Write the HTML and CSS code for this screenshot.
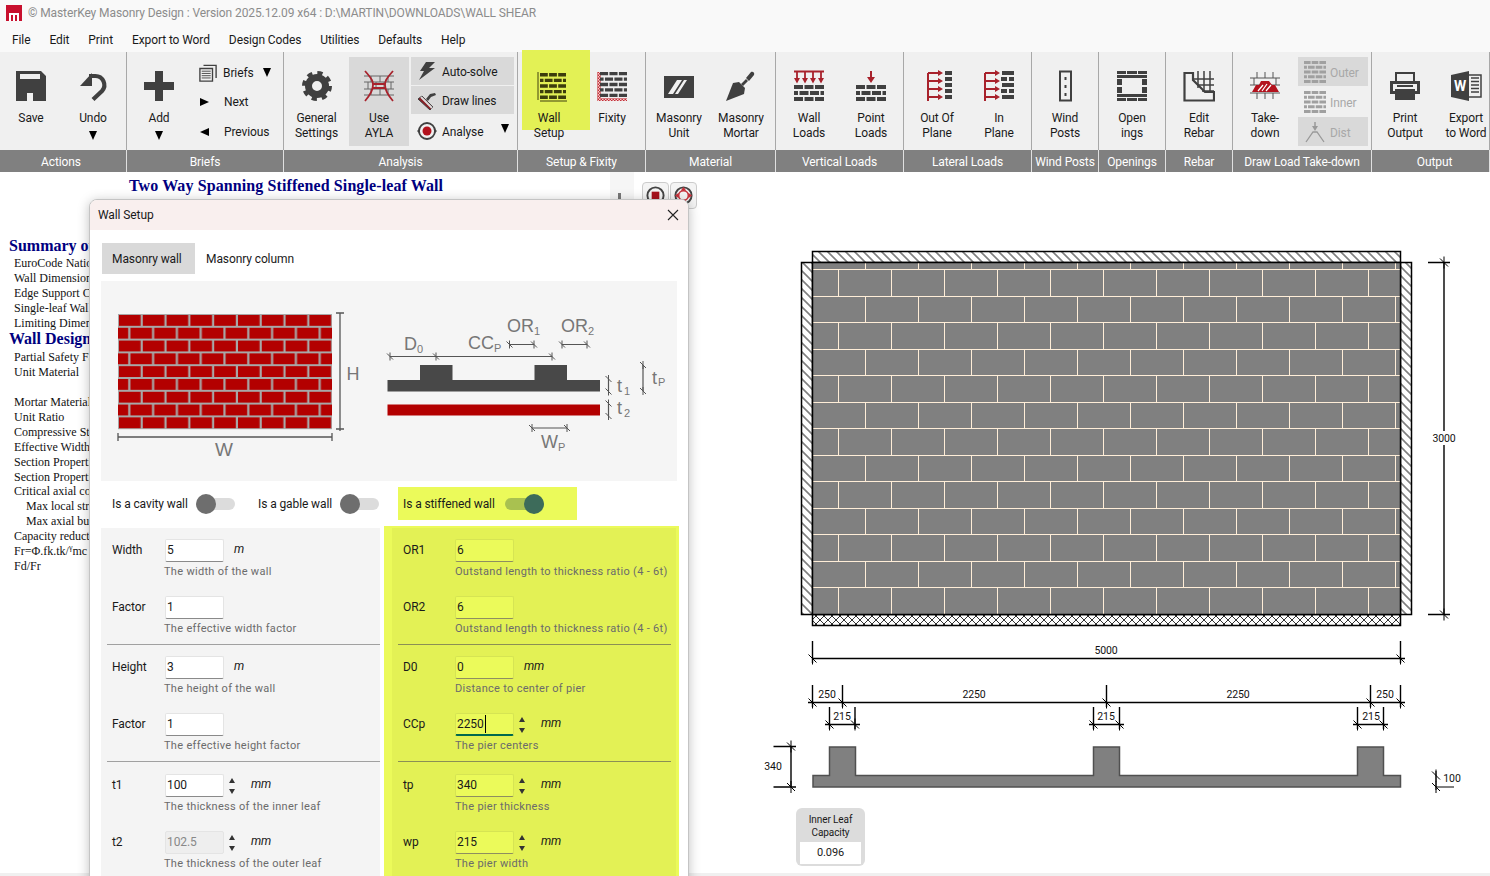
FILE: index.html
```html
<!DOCTYPE html>
<html lang="en">
<head>
    <meta charset="UTF-8">
    <meta name="viewport" content="width=device-width, initial-scale=1.0">
    <title>MasterKey Masonry Design</title>
    <link rel="stylesheet" href="styles.css">
</head>
<body>
    <!-- shared icon parts -->
    <svg class="defs" width="0" height="0">
        <defs>
            <symbol id="bricks" viewBox="0 0 30 30" preserveAspectRatio="none">
                <g fill="currentColor">
                    <path d="M0 0h9v4H0zM10.500 0h9v4h-9zM21 0h9v4h-9z"/>
                    <path d="M0 6.500h4v4H0zM5.500 6.500h9v4h-9zM16 6.500h9v4h-9zM26.500 6.500H30v4h-3.500z"/>
                    <path d="M0 13h9v4H0zM10.500 13h9v4h-9zM21 13h9v4h-9z"/>
                    <path d="M0 19.500h4v4H0zM5.500 19.500h9v4h-9zM16 19.500h9v4h-9zM26.500 19.500H30v4h-3.500z"/>
                    <path d="M0 26h9v4H0zM10.500 26h9v4h-9zM21 26h9v4h-9z"/>
                </g>
            </symbol>
            <symbol id="bricks-low" viewBox="0 0 30 16" preserveAspectRatio="none">
                <path fill="currentColor" d="M0 0h9v4H0zM10.500 0h9v4h-9zM21 0h9v4h-9zM0 6h4v4H0zM5.500 6h9v4h-9zM16 6h9v4h-9zM26.500 6H30v4h-3.500zM0 12h9v4H0zM10.500 12h9v4h-9zM21 12h9v4h-9z"/>
            </symbol>
            <g id="tick"><path d="M-4 -4L4 4M0 -6V6" stroke="#000" fill="none"/></g>
            <g id="tick-grey"><path d="M-3 -3L3 3M0 -4V4" stroke="#555" fill="none"/></g>
            <pattern id="hatch" width="9" height="9" patternUnits="userSpaceOnUse">
                <path d="M-1 -1L10 10M-1 8L1 10M8 -1L10 1" stroke="#808080" stroke-width="1.600"/>
            </pattern>
            <pattern id="cross" width="8" height="8" patternUnits="userSpaceOnUse">
                <path d="M0 0L8 8M8 0L0 8" stroke="#333" stroke-width="1"/>
            </pattern>
            <pattern id="red-check" width="3" height="3" patternUnits="userSpaceOnUse">
                <rect width="3" height="3" fill="#f3c9c9"/>
                <path d="M0 0h1.500v1.500H0zM1.500 1.500H3V3H1.500z" fill="#c0303a"/>
            </pattern>
            <pattern id="wall-bricks" x="812" y="269" width="53" height="53" patternUnits="userSpaceOnUse">
                <rect width="53" height="53" fill="#808080"/>
                <path d="M0 0h53v1H0zM0 27h53v1H0zM26 1h1v26h-1zM0 28h1v25H0z" fill="#ffeed8"/>
            </pattern>
            <pattern id="red-bricks" x="118" y="314" width="23.800" height="25.600" patternUnits="userSpaceOnUse">
                <rect width="23.800" height="25.600" fill="#a8a8a8"/>
                <path d="M1 1h21.600v10.800H1zM-11.400 13.800h21.600v10.800h-21.600zM12.400 13.800h21.600v10.800H12.400z" fill="#b30000"/>
            </pattern>
        </defs>
    </svg>

    <header class="titlebar">
        <svg class="logo" viewBox="0 0 16 16"><rect width="16" height="16" fill="#c8102e"/><path d="M3 8h10v8h-2V10H9v6H7V10H5v6H3z" fill="#fff"/></svg>
        <span>© MasterKey Masonry Design : Version 2025.12.09 x64 : D:\MARTIN\DOWNLOADS\WALL SHEAR</span>
    </header>

    <nav class="menubar">
        <span>File</span><span>Edit</span><span>Print</span><span>Export to Word</span><span>Design Codes</span><span>Utilities</span><span>Defaults</span><span>Help</span>
    </nav>

    <section class="ribbon">
        <div class="group g-actions">
            <div class="group-body">
                <div class="tool">
                    <svg class="icon" viewBox="0 0 32 32"><path fill-rule="evenodd" fill="#404040" d="M1 1h25l5 5v25H1zM5 4v5h20V4zM12 23v8h6v-8z"/></svg>
                    <span>Save</span>
                </div>
                <div class="tool">
                    <svg class="icon" viewBox="0 0 32 32"><path d="M12 6h6a9 9 0 0 1 7 15l-9 8.500" fill="none" stroke="#404040" stroke-width="4.200"/><path d="M3 16L15 3v13z" fill="#404040"/></svg>
                    <span>Undo</span>
                    <i class="tri-down tool-caret"></i>
                </div>
            </div>
            <div class="group-foot">Actions</div>
        </div>

        <div class="group g-briefs">
            <div class="group-body">
                <div class="tool tool-wide">
                    <svg class="icon" viewBox="0 0 32 32"><path d="M12 1h8v11h11v8H20v11h-8V20H1v-8h11z" fill="#404040"/></svg>
                    <span>Add</span>
                    <i class="tri-down tool-caret"></i>
                </div>
                <div class="side-list side-briefs">
                    <div class="side-item">
                        <svg class="side-icon" viewBox="0 0 20 20"><path d="M5 1.500h14v14M1 5h14v14H1z" fill="#f0f0f0" stroke="#404040" stroke-width="1.500"/><path d="M3 8h10M3 10.500h10M3 13h10M3 15.500h10" stroke="#404040"/></svg>
                        <span>Briefs</span><i class="tri-down brief-caret"></i>
                    </div>
                    <div class="side-item"><i class="tri-right"></i><span>Next</span></div>
                    <div class="side-item"><i class="tri-left"></i><span>Previous</span></div>
                </div>
            </div>
            <div class="group-foot">Briefs</div>
        </div>

        <div class="group g-analysis">
            <div class="group-body">
                <div class="tool tool-general">
                    <svg class="icon" viewBox="0 0 32 32"><circle cx="16" cy="16" r="8.500" fill="none" stroke="#404040" stroke-width="7"/><circle cx="16" cy="16" r="13" fill="none" stroke="#404040" stroke-width="4" stroke-dasharray="5.200 5"/></svg>
                    <span>General<br>Settings</span>
                </div>
                <div class="tool tool-ayla">
                    <svg class="icon" viewBox="0 0 32 32"><path d="M1 6H31M1 12H31M1 19H31M1 25H31M8 6v6M17 6v6M25 6v6M5 12v7M13 12v7M21 12v7M28 12v7M8 19v6M17 19v6M25 19v6" stroke="#666" fill="none"/><path d="M2 1C10 10 10 12 10 15C10 19 8 24 2 31M30 1C22 10 22 12 22 15C22 19 24 24 30 31M10 14H22M10 18H22" stroke="#a8222c" stroke-width="1.800" fill="none"/></svg>
                    <span>Use<br>AYLA</span>
                </div>
                <div class="side-list side-analysis">
                    <div class="side-item side-on">
                        <svg class="side-icon" viewBox="0 0 20 20"><path d="M9 1h9l-6 6h6L2 19l5-9H3z" fill="#404040"/></svg>
                        <span>Auto-solve</span>
                    </div>
                    <div class="side-item side-on">
                        <svg class="side-icon" viewBox="0 0 20 20"><path d="M5 6L16 17l-3 3L1 9z" fill="#8a1f26" stroke="#404040"/><path d="M4 7l11 11" stroke="#ddd" stroke-width="2"/><path d="M9 9l4-5 5-1 1 2-5 2-3 4" fill="#404040"/></svg>
                        <span>Draw lines</span>
                    </div>
                    <div class="side-item side-analyse">
                        <svg class="side-icon" viewBox="0 0 20 20"><circle cx="10" cy="10" r="8" fill="none" stroke="#404040" stroke-width="1.800"/><circle cx="10" cy="10" r="4.500" fill="#b3121d"/><path d="M0 10l3-3v6zM20 10l-3-3v6z" fill="#404040"/></svg>
                        <span>Analyse</span><i class="tri-down analyse-caret"></i>
                    </div>
                </div>
            </div>
            <div class="group-foot">Analysis</div>
        </div>

        <div class="group g-setup">
            <div class="group-body">
                <div class="tool tool-mark">
                    <svg class="icon icon-olive" viewBox="0 0 32 32"><use href="#bricks" x="3" y="3" width="26" height="26"/><path d="M1 2v28M3 31H30" stroke="#404010" fill="none"/></svg>
                    <span>Wall<br>Setup</span>
                </div>
                <div class="tool tool-fixity">
                    <svg class="icon icon-dark" viewBox="0 0 32 32"><path d="M1 2h4v26h26v3H1z" fill="url(#red-check)"/><use href="#bricks" x="4" y="2" width="27" height="25"/></svg>
                    <span>Fixity</span>
                </div>
            </div>
            <div class="group-foot">Setup &amp; Fixity</div>
        </div>

        <div class="group g-material">
            <div class="group-body">
                <div class="tool">
                    <svg class="icon" viewBox="0 0 32 32"><path fill-rule="evenodd" fill="#404040" d="M1 6h30v22H1zM5 24h5L19 10h-5zM12 24h3L24 10h-3z"/></svg>
                    <span>Masonry<br>Unit</span>
                </div>
                <div class="tool">
                    <svg class="icon" viewBox="0 0 32 32"><path d="M1 31L8 13l6-1 6 6-1 6z" fill="#404040"/><path d="M16 14l5-5 2 2-5 5zM21 8l5-6c2-1 4 1 3 3l-5 6z" fill="#404040"/></svg>
                    <span>Masonry<br>Mortar</span>
                </div>
            </div>
            <div class="group-foot">Material</div>
        </div>

        <div class="group g-vertical">
            <div class="group-body">
                <div class="tool">
                    <svg class="icon icon-dark" viewBox="0 0 32 32"><use href="#bricks-low" x="1" y="15" width="30" height="16"/><path d="M1 1.500H31M4 1v10M12 1v10M20 1v10M28 1v10" stroke="#a8222c" stroke-width="1.800" fill="none"/><path d="M1 8h6l-3 5.500zM9 8h6l-3 5.500zM17 8h6l-3 5.500zM25 8h6l-3 5.500z" fill="#a8222c"/></svg>
                    <span>Wall<br>Loads</span>
                </div>
                <div class="tool">
                    <svg class="icon icon-dark" viewBox="0 0 32 32"><use href="#bricks-low" x="1" y="15" width="30" height="16"/><path d="M16 1v8" stroke="#a8222c" stroke-width="2"/><path d="M12 7h8l-4 6z" fill="#a8222c"/></svg>
                    <span>Point<br>Loads</span>
                </div>
            </div>
            <div class="group-foot">Vertical Loads</div>
        </div>

        <div class="group g-lateral">
            <div class="group-body">
                <div class="tool">
                    <svg class="icon icon-dark" viewBox="0 0 32 32"><path d="M7 3v28M7 3H19M7 11H19M7 19H19M7 27H19" stroke="#a8222c" stroke-width="2" fill="none"/><path d="M17 0l5 3-5 3zM17 8l5 3-5 3zM17 16l5 3-5 3zM17 24l5 3-5 3z" fill="#a8222c"/><path d="M24 1h7v4h-7zM24 7h7v4h-7zM24 13h7v4h-7zM24 19h7v4h-7zM24 25h7v4h-7z" fill="#404040"/></svg>
                    <span>Out Of<br>Plane</span>
                </div>
                <div class="tool">
                    <svg class="icon icon-dark" viewBox="0 0 32 32"><path d="M2 3v28M2 3H14M2 11H14M2 19H14M2 27H14" stroke="#a8222c" stroke-width="2" fill="none"/><path d="M12 0l5 3-5 3zM12 8l5 3-5 3zM12 16l5 3-5 3zM12 24l5 3-5 3z" fill="#a8222c"/><path d="M19 1h12v4H19zM18 7h6v4h-6zM26 7h5v4h-5zM19 13h12v4H19zM18 19h6v4h-6zM26 19h5v4h-5zM19 25h12v4H19z" fill="#404040"/></svg>
                    <span>In<br>Plane</span>
                </div>
            </div>
            <div class="group-foot">Lateral Loads</div>
        </div>

        <div class="group g-narrow">
            <div class="group-body">
                <div class="tool tool-solo">
                    <svg class="icon" viewBox="0 0 32 32"><rect x="11" y="1.500" width="11" height="29" fill="none" stroke="#404040" stroke-width="2"/><path d="M15.500 7h2v3h-2zM15.500 15h2v3h-2zM15.500 23h2v3h-2z" fill="#404040"/></svg>
                    <span>Wind<br>Posts</span>
                </div>
            </div>
            <div class="group-foot">Wind Posts</div>
        </div>

        <div class="group g-narrow">
            <div class="group-body">
                <div class="tool tool-solo">
                    <svg class="icon" viewBox="0 0 32 32"><path d="M1 1h9v3H1zM11 1h10v3H11zM22 1h9v3h-9zM1 28h9v3H1zM11 28h10v3H11zM22 28h9v3h-9zM1 5h30v3H1zM1 24h30v3H1zM1 9h5v6H1zM1 17h5v6H1zM26 9h5v6h-5zM26 17h5v6h-5z" fill="#404040"/></svg>
                    <span>Open<br>ings</span>
                </div>
            </div>
            <div class="group-foot">Openings</div>
        </div>

        <div class="group g-narrow">
            <div class="group-body">
                <div class="tool tool-solo">
                    <svg class="icon" viewBox="0 0 32 32"><path d="M1.500 3V30.500H31V22H22L10 10V3z" fill="none" stroke="#404040" stroke-width="2.200"/><path d="M10 9H31M14 15H31M19 21H31M15 1V18M21 1V22M27 1V22" stroke="#404040" stroke-width="1.500" fill="none"/></svg>
                    <span>Edit<br>Rebar</span>
                </div>
            </div>
            <div class="group-foot">Rebar</div>
        </div>

        <div class="group g-takedown">
            <div class="group-body">
                <div class="tool tool-wide">
                    <svg class="icon" viewBox="0 0 32 32"><path d="M1 8H31M1 15H31M1 23H31M8 2v6M16 2v6M24 2v6M5 8v7M27 8v7M8 23v6M16 23v6M24 23v6" stroke="#555" fill="none"/><path d="M3 22l4-7h3l2-4h8l3 4h3l4 7z" fill="#b3121d"/><path d="M9 21l5-6M13 21l5-7M17 21l5-6" stroke="#fff" stroke-width="1.200"/></svg>
                    <span>Take-<br>down</span>
                </div>
                <div class="side-list side-takedown">
                    <div class="side-item side-off side-on">
                        <svg class="side-icon" viewBox="0 0 22 22"><use href="#bricks" width="22" height="22"/></svg>
                        <span>Outer</span>
                    </div>
                    <div class="side-item side-off">
                        <svg class="side-icon" viewBox="0 0 22 22"><use href="#bricks" width="22" height="22"/></svg>
                        <span>Inner</span>
                    </div>
                    <div class="side-item side-off side-on">
                        <svg class="side-icon" viewBox="0 0 22 22"><path d="M11 1v6" stroke="#999" stroke-width="1.500"/><path d="M8 5h6l-3 5z" fill="#999"/><path d="M2 21L9 11h4l7 10" fill="none" stroke="#999" stroke-width="1.300"/></svg>
                        <span>Dist</span>
                    </div>
                </div>
            </div>
            <div class="group-foot">Draw Load Take-down</div>
        </div>

        <div class="group g-output">
            <div class="group-body">
                <div class="tool">
                    <svg class="icon" viewBox="0 0 32 32"><path d="M7 12V3h18v9" fill="none" stroke="#404040" stroke-width="2"/><path fill-rule="evenodd" fill="#404040" d="M1 11h30v13h-5v6H6v-6H1zM4 14v7h2v-2h20v2h2v-7zM8 15h16v2H8z"/></svg>
                    <span>Print<br>Output</span>
                </div>
                <div class="tool tool-last">
                    <svg class="icon" viewBox="0 0 32 32"><path d="M1 5L19 1v30L1 27z" fill="#404040"/><path d="M19 5h12v22H19M21 8h8M21 11.500h8M21 15h8M21 18.500h8M21 22h8" fill="none" stroke="#404040" stroke-width="1.500"/><text x="10" y="21" class="word-w">W</text></svg>
                    <span>Export<br>to Word</span>
                </div>
            </div>
            <div class="group-foot">Output</div>
        </div>
    </section>

    <main class="workspace">
        <div class="report">
            <h1>Two Way Spanning Stiffened Single-leaf Wall</h1>
            <h2>Summary of Results</h2>
            <p>EuroCode National Annex</p>
            <p>Wall Dimensions</p>
            <p>Edge Support Conditions</p>
            <p>Single-leaf Wall Thickness</p>
            <p>Limiting Dimensions</p>
            <h2 class="h-tight">Wall Design</h2>
            <p>Partial Safety Factors</p>
            <p>Unit Material</p>
            <p class="gap"></p>
            <p>Mortar Material</p>
            <p>Unit Ratio</p>
            <p>Compressive Strength</p>
            <p>Effective Width</p>
            <p>Section Properties</p>
            <p>Section Properties</p>
            <p>Critical axial compression</p>
            <p class="indent">Max local stress</p>
            <p class="indent">Max axial buckling</p>
            <p>Capacity reduction</p>
            <p>Fr=Φ.fk.tk/<sup>γ</sup>mc</p>
            <p>Fd/Fr</p>
        </div>
        <div class="splitter"><i></i></div>
        <div class="viewbar">
            <button class="view-btn"><svg viewBox="0 0 22 22"><circle cx="11" cy="11" r="8.500" fill="none" stroke="#444" stroke-width="2"/><rect x="7" y="7" width="8" height="8" fill="#a8121d"/></svg></button>
            <button class="view-btn"><svg viewBox="0 0 22 22"><circle cx="11" cy="11" r="8.500" fill="none" stroke="#444" stroke-width="2"/><path d="M11 2l3 4H8zM11 20l3-4H8zM2 11l4-3v6zM20 11l-4-3v6z" fill="#c8313a"/><circle cx="11" cy="11" r="5" fill="none" stroke="#c8313a" stroke-width="1.500"/></svg></button>
        </div>

        <div class="drawing">
            <svg class="drawing-svg" viewBox="700 172 790 701">
                <!-- wall elevation -->
                <rect x="812.500" y="251.500" width="588" height="11" fill="url(#hatch)" stroke="#000" stroke-width="1.500"/>
                <rect x="801.500" y="262.500" width="11" height="352" fill="url(#hatch)" stroke="#000" stroke-width="1.500"/>
                <rect x="1400.500" y="262.500" width="11" height="352" fill="url(#hatch)" stroke="#000" stroke-width="1.500"/>
                <rect x="812.500" y="614.500" width="588" height="11" fill="url(#cross)" stroke="#000" stroke-width="1.500"/>
                <rect x="812.500" y="262.500" width="588" height="352" fill="url(#wall-bricks)" stroke="#000" stroke-width="1.500"/>

                <!-- height dimension -->
                <path d="M1428 262.500H1450M1444 262.500V614.500M1428 614.500H1450" stroke="#000" stroke-width="1.400" fill="none"/>
                <use href="#tick" x="1444" y="262.500"/><use href="#tick" x="1444" y="614.500"/>
                <rect x="1431" y="431" width="26" height="14" fill="#fff"/>
                <text x="1444" y="442" class="dim">3000</text>

                <!-- plan dimensions -->
                <path d="M812.500 641V663M1400.500 641V663M812.500 658.500H1405" stroke="#000" stroke-width="1.400" fill="none"/>
                <use href="#tick" x="812.500" y="658.500"/><use href="#tick" x="1400.500" y="658.500"/>
                <text x="1106" y="654" class="dim">5000</text>

                <path d="M812.500 685V707M842.500 685V707M1106.500 685V707M1370.500 685V707M1400.500 685V707M808 702.500H1405" stroke="#000" stroke-width="1.400" fill="none"/>
                <use href="#tick" x="812.500" y="702.500"/><use href="#tick" x="842.500" y="702.500"/><use href="#tick" x="1106.500" y="702.500"/><use href="#tick" x="1370.500" y="702.500"/><use href="#tick" x="1400.500" y="702.500"/>
                <text x="827" y="698" class="dim">250</text>
                <text x="974" y="698" class="dim">2250</text>
                <text x="1238" y="698" class="dim">2250</text>
                <text x="1385" y="698" class="dim">250</text>

                <path d="M829.500 707V729M855 707V729M825 724.500H860M1093.500 707V729M1119.500 707V729M1089 724.500H1124M1357.500 707V729M1383.500 707V729M1353 724.500H1388" stroke="#000" stroke-width="1.400" fill="none"/>
                <use href="#tick" x="829.500" y="724.500"/><use href="#tick" x="855" y="724.500"/><use href="#tick" x="1093.500" y="724.500"/><use href="#tick" x="1119.500" y="724.500"/><use href="#tick" x="1357.500" y="724.500"/><use href="#tick" x="1383.500" y="724.500"/>
                <text x="842" y="720" class="dim">215</text>
                <text x="1106" y="720" class="dim">215</text>
                <text x="1371" y="720" class="dim">215</text>

                <!-- section through wall and piers -->
                <path d="M813 775.500H829.500V747H855.500V775.500H1093.500V747H1119.500V775.500H1357.500V747H1383.500V775.500H1400.500V787H813z" fill="#808080" stroke="#505050" stroke-width="1.500"/>
                <path d="M773.500 746.500H796M773.500 787H796M791 746.500V787" stroke="#000" stroke-width="1.400" fill="none"/>
                <use href="#tick" x="791" y="746.500"/><use href="#tick" x="791" y="787"/>
                <text x="773" y="770" class="dim">340</text>
                <path d="M1436 771V790M1436 787H1454" stroke="#000" fill="none"/>
                <use href="#tick" x="1436" y="775.500"/><use href="#tick" x="1436" y="787"/>
                <text x="1452" y="782" class="dim">100</text>
            </svg>
            <div class="capacity">
                <div class="capacity-title">Inner Leaf<br>Capacity</div>
                <div class="capacity-value">0.096</div>
            </div>
        </div>
    </main>
    <div class="statusbar"></div>

    <div class="dialog">
        <div class="dialog-head">
            <span>Wall Setup</span>
            <svg class="dialog-close" viewBox="0 0 12 12"><path d="M1 1L11 11M11 1L1 11" stroke="#222" stroke-width="1.100"/></svg>
        </div>
        <div class="tabs">
            <span class="tab tab-on">Masonry wall</span>
            <span class="tab">Masonry column</span>
        </div>

        <div class="picture">
            <svg viewBox="101 281 576 200">
                <!-- elevation -->
                <rect x="118" y="314" width="214" height="115.200" fill="url(#red-bricks)"/>
                <path d="M340 313V431M336 313H344M336 429H344M118 437H332M118 433V441M332 433V441" stroke="#555" stroke-width="1.300" fill="none"/>
                <text x="353" y="380" class="pic-text" text-anchor="middle">H</text>
                <text x="224" y="456" class="pic-text pic-big" text-anchor="middle">W</text>

                <!-- section -->
                <path d="M387.500 380H420V365H452.500V380H534.500V365H567V380H600V391.500H387.500z" fill="#484848"/>
                <rect x="387.500" y="404.500" width="212.500" height="11" fill="#b30000"/>

                <path d="M390 356.500H552M509.500 344.500H534M562 344.500H587M532 428H567M608.500 379V391.500M608.500 403.500V416M643 365V391" stroke="#555" stroke-width="1.200" fill="none"/>
                <use href="#tick-grey" x="390" y="356.500"/><use href="#tick-grey" x="436" y="356.500"/><use href="#tick-grey" x="552" y="356.500"/>
                <use href="#tick-grey" x="509.500" y="344.500"/><use href="#tick-grey" x="534" y="344.500"/>
                <use href="#tick-grey" x="562" y="344.500"/><use href="#tick-grey" x="587" y="344.500"/>
                <use href="#tick-grey" x="532" y="428"/><use href="#tick-grey" x="567" y="428"/>
                <use href="#tick-grey" x="608.500" y="379"/><use href="#tick-grey" x="608.500" y="391.500"/>
                <use href="#tick-grey" x="608.500" y="403.500"/><use href="#tick-grey" x="608.500" y="416"/>
                <use href="#tick-grey" x="643" y="365"/><use href="#tick-grey" x="643" y="391"/>

                <text x="404" y="350" class="pic-text">D<tspan class="pic-sub" dy="3">0</tspan></text>
                <text x="468" y="349" class="pic-text">CC<tspan class="pic-sub" dy="3">P</tspan></text>
                <text x="507" y="332" class="pic-text">OR<tspan class="pic-sub" dy="3">1</tspan></text>
                <text x="561" y="332" class="pic-text">OR<tspan class="pic-sub" dy="3">2</tspan></text>
                <text x="617" y="392" class="pic-text">t<tspan class="pic-sub" dy="3" dx="2">1</tspan></text>
                <text x="617" y="414" class="pic-text">t<tspan class="pic-sub" dy="3" dx="2">2</tspan></text>
                <text x="652" y="384" class="pic-text">t<tspan class="pic-sub" dy="2" dx="1">P</tspan></text>
                <text x="541" y="448" class="pic-text">W<tspan class="pic-sub" dy="3">P</tspan></text>
            </svg>
        </div>

        <div class="toggles">
            <div class="toggle-item t-cavity"><span>Is a cavity wall</span><i class="toggle"></i></div>
            <div class="toggle-item t-gable"><span>Is a gable wall</span><i class="toggle"></i></div>
            <div class="toggle-item t-stiff"><span>Is a stiffened wall</span><i class="toggle toggle-on"></i></div>
        </div>

        <div class="form">
            <div class="panel">
                <div class="section">
                    <div class="field">
                        <label>Width</label><div class="input">5</div><em class="unit">m</em>
                        <small>The width of the wall</small>
                    </div>
                    <div class="field">
                        <label>Factor</label><div class="input">1</div>
                        <small>The effective width factor</small>
                    </div>
                </div>
                <div class="section">
                    <div class="field">
                        <label>Height</label><div class="input">3</div><em class="unit">m</em>
                        <small>The height of the wall</small>
                    </div>
                    <div class="field">
                        <label>Factor</label><div class="input">1</div>
                        <small>The effective height factor</small>
                    </div>
                </div>
                <div class="section section-last">
                    <div class="field">
                        <label>t1</label><div class="input">100</div><span class="spin"><i></i><i></i></span><em class="unit">mm</em>
                        <small>The thickness of the inner leaf</small>
                    </div>
                    <div class="field">
                        <label>t2</label><div class="input input-off">102.5</div><span class="spin"><i></i><i></i></span><em class="unit">mm</em>
                        <small>The thickness of the outer leaf</small>
                    </div>
                </div>
            </div>

            <div class="panel-mark">
                <div class="panel panel-right">
                    <div class="section">
                        <div class="field">
                            <label>OR1</label><div class="input">6</div>
                            <small>Outstand length to thickness ratio (4 - 6t)</small>
                        </div>
                        <div class="field">
                            <label>OR2</label><div class="input">6</div>
                            <small>Outstand length to thickness ratio (4 - 6t)</small>
                        </div>
                    </div>
                    <div class="section">
                        <div class="field">
                            <label>D0</label><div class="input">0</div><em class="unit">mm</em>
                            <small>Distance to center of pier</small>
                        </div>
                        <div class="field">
                            <label>CCp</label><div class="input input-focus"><span class="caret">2250</span></div><span class="spin"><i></i><i></i></span><em class="unit">mm</em>
                            <small>The pier centers</small>
                        </div>
                    </div>
                    <div class="section section-last">
                        <div class="field">
                            <label>tp</label><div class="input">340</div><span class="spin"><i></i><i></i></span><em class="unit">mm</em>
                            <small>The pier thickness</small>
                        </div>
                        <div class="field">
                            <label>wp</label><div class="input">215</div><span class="spin"><i></i><i></i></span><em class="unit">mm</em>
                            <small>The pier width</small>
                        </div>
                    </div>
                </div>
            </div>
        </div>
    </div>
</body>
</html>
```

FILE: styles.css
```css
* { box-sizing: border-box; }
html, body { margin: 0; height: 876px; overflow: hidden; }
body { font-family: Roboto, "Open Sans", sans-serif; font-size: 12px; letter-spacing: -.1px; color: #1a1a1a; background: #fff; position: relative; }
.defs { position: absolute; }

/* title and menu */
.titlebar { height: 28px; display: flex; align-items: center; gap: 6px; padding-left: 6px; padding-bottom: 2px; background: #f9f9f9; color: #8c8c8c; }
.logo { width: 16px; height: 16px; margin-top: -1px; }
.menubar { height: 24px; display: flex; align-items: center; gap: 19px; padding-left: 12px; background: #f9f9f9; }

/* ribbon */
.ribbon { display: flex; height: 120px; background: #f0f0f0; }
.group { display: flex; flex-direction: column; flex: none; }
.group-body { height: 98px; display: flex; border-right: 1px solid #a8a8a8; padding-left: 2px; }
.group-foot { height: 22px; background: #808080; color: #fff; text-align: center; line-height: 24px; border-right: 1px solid #e0e0e0; white-space: nowrap; }
.g-actions { width: 127px; }
.g-actions .group-body { padding-left: 0; }
.g-actions .group-foot { padding-right: 4px; }
.g-briefs { width: 157px; }
.g-briefs .group-body { padding-left: 0; }
.g-analysis { width: 234px; }
.g-analysis .group-body { padding-left: 0; }
.g-setup { width: 128px; }
.g-setup .group-body { padding-left: 0; }
.g-material { width: 130px; }
.g-vertical { width: 128px; }
.g-lateral { width: 128px; }
.g-narrow { width: 67px; }
.g-narrow .group-body { padding-left: 0; }
.g-takedown { width: 139px; }
.g-takedown .group-body { padding-left: 0; }
.g-output { width: 118px; }
.g-output .group-body { overflow: hidden; }
.g-output .group-foot { padding-left: 8px; }

.tool { width: 62px; flex: none; padding-top: 18px; display: flex; flex-direction: column; align-items: center; text-align: center; line-height: 15px; position: relative; }
.tool .icon { width: 32px; height: 32px; margin-bottom: 9px; flex: none; }
.tool-wide { width: 64px; }
.tool-solo { width: 66px; }
.tool-general { width: 65px; }
.tool-last { width: 60px; }
.tool-ayla { width: 60px; height: 89px; margin-top: 5px; padding-top: 13px; background: #d9d9d9; }
.tool-mark { isolation: isolate; }
.tool-mark::before { content: ""; position: absolute; z-index: -1; left: 4px; top: -2px; width: 68px; height: 80px; background: #e3f155; }
.tool-mark .icon { transform: translateX(4px); }
.tool-fixity { left: 1px; }
.icon-olive { color: #3d3d0c; }
.icon-dark { color: #404040; }
.tool-caret { position: absolute; left: 50%; margin-left: -4px; top: 79px; }
.word-w { font-family: Roboto, sans-serif; font-size: 14px; font-weight: 700; fill: #fff; text-anchor: middle; }

.tri-down { display: inline-block; width: 0; height: 0; border-left: 4.5px solid transparent; border-right: 4.5px solid transparent; border-top: 9px solid #000; }
.tri-right { display: inline-block; width: 0; height: 0; border-top: 4.5px solid transparent; border-bottom: 4.5px solid transparent; border-left: 9px solid #000; }
.tri-left { display: inline-block; width: 0; height: 0; border-top: 4.5px solid transparent; border-bottom: 4.5px solid transparent; border-right: 9px solid #000; }

.side-list { display: flex; flex-direction: column; flex: none; }
.side-item { display: flex; align-items: center; position: relative; }
.side-icon { width: 20px; height: 20px; flex: none; }

.side-briefs { padding: 6px 0 0 8px; width: 92px; }
.side-briefs .side-item { height: 29.5px; gap: 6px; }
.side-briefs .tri-right, .side-briefs .tri-left { margin-right: 9px; margin-left: 1px; }
.side-briefs .side-icon { width: 18px; height: 20px; }
.brief-caret { margin-left: 3px; }

.side-analysis { margin-left: 2px; padding-top: 5px; width: 103px; }
.side-analysis .side-item { height: 28px; padding-left: 6px; gap: 5px; margin-bottom: 1px; }
.side-analysis .side-item span { padding-top: 2px; }
.side-analysis .side-analyse { height: 32px; margin: 0; }
.side-on { background: #d9d9d9; }
.analyse-caret { position: absolute; left: 90px; top: 9px; }

.side-takedown { margin-left: 1px; padding-top: 5px; width: 70px; color: #a8a8a8; }
.side-takedown .side-item { height: 29px; padding-left: 6px; gap: 4px; margin-bottom: 1px; }
.side-takedown .side-item span { padding-top: 2px; }
.side-takedown .side-icon { width: 22px; height: 22px; color: #a0a0a0; }

/* report pane and canvas */
.workspace { height: 701px; display: flex; }
.report { width: 610px; flex: none; padding-left: 9px; font-family: "Liberation Serif", serif; letter-spacing: 0; overflow: hidden; }
.report h1 { margin: 5px 0 42px 120px; font-size: 16px; line-height: 18px; letter-spacing: .1px; color: #000080; }
.report h2 { margin: 0 0 1px; font-size: 16px; line-height: 18px; color: #000080; }
.report .h-tight { margin-top: 0; margin-bottom: 2px; }
.report p { margin: 0 0 0 5px; font-size: 12px; line-height: 15px; height: 14.9px; color: #111; white-space: nowrap; }
.report p.indent { margin-left: 17px; }
.report sup { font-size: 8px; line-height: 0; }

.splitter { width: 24px; flex: none; background: #f6f6f6; position: relative; }
.splitter i { position: absolute; left: 8px; top: 21px; width: 3px; height: 8px; background: #777; }
.viewbar { width: 66px; flex: none; display: flex; gap: 1px; padding: 10px 0 0 8px; align-items: flex-start; }
.view-btn { width: 27px; height: 27px; padding: 2px; border: 1px solid #ccc; border-radius: 4px; background: #f4f4f4; }
.view-btn svg { width: 21px; height: 21px; display: block; }

.drawing { flex: none; width: 790px; height: 701px; position: relative; }
.drawing-svg { display: block; width: 790px; height: 701px; }
.dim { font-family: Roboto, sans-serif; font-size: 10.5px; fill: #111; text-anchor: middle; }
.capacity { position: absolute; left: 96px; top: 636px; width: 69px; height: 58px; padding: 6px 4px 2px; background: #dcdcdc; border-radius: 6px; text-align: center; font-size: 10px; line-height: 12.5px; }
.capacity-title { height: 28px; }
.capacity-value { background: #fff; height: 22px; line-height: 22px; font-size: 11px; }
.statusbar { height: 3px; background: #f0f0f0; }

/* wall setup dialog */
.dialog { position: absolute; left: 89px; top: 199px; width: 600px; height: 690px; background: #fff; border: 1px solid #c4c4c4; border-radius: 8px 8px 0 0; box-shadow: 0 2px 12px rgba(0, 0, 0, .25); overflow: hidden; }
.dialog-head { height: 30px; display: flex; align-items: center; justify-content: space-between; padding: 0 9px 0 8px; background: #f9efee; }
.dialog-close { width: 12px; height: 12px; }
.tabs { display: flex; gap: 1px; padding: 13px 0 0 12px; height: 51px; }
.tab { height: 31px; line-height: 32px; padding: 0 10px; }
.tab-on { background: #d9d9d9; width: 93px; white-space: nowrap; }
.picture { margin-left: 11px; width: 576px; height: 200px; background: #f5f5f5; }
.picture svg { display: block; width: 576px; height: 200px; }
.pic-text { font-family: "Liberation Sans", sans-serif; font-size: 18px; letter-spacing: 0; fill: #777; }
.pic-big { font-size: 19px; }
.pic-sub { font-size: 11px; }

.toggles { position: relative; height: 46px; display: flex; padding: 6px 0 0 22px; }
.toggle-item { display: flex; align-items: center; height: 33px; }
.toggle-item span { white-space: nowrap; }
.t-cavity { width: 146px; gap: 8px; }
.t-gable { width: 140px; gap: 8px; }
.t-stiff { width: 179px; margin-left: 0; padding-left: 5px; gap: 10px; background: #ebfa5a; }
.toggle { display: block; width: 39px; height: 12px; border-radius: 6px; background: #dcdcdc; position: relative; flex: none; }
.toggle::before { content: ""; position: absolute; left: 0; top: -4px; width: 20px; height: 20px; border-radius: 50%; background: #6e6e6e; }
.toggle-on { background: #a9c150; }
.toggle-on::before { left: 19px; background: #3d6b5a; }

.form { display: flex; align-items: flex-start; padding-left: 11px; margin-top: -1px; }
.panel { width: 279px; margin-top: 2px; height: 400px; padding-left: 6px; background: #f4f4f4; }
.panel-mark { margin-left: 4px; width: 295px; height: 400px; padding-left: 8px; padding-right: 3px; background: #ebfa5a; }
.panel-right { width: 284px; background: #e3f155; }
.panel-right .input { background: #ebfa5a; border-color: #d6e453; border-bottom-color: #8e8e60; }
.panel-right .section { margin-right: 5px; border-color: #8b8f55; }
.panel-right small { color: #5f6333; }
.section { padding: 11px 0 0 5px; border-bottom: 1px solid #a0a0a0; height: 117px; }
.section + .section { height: 117px; }
.section-last { border-bottom: 0; padding-top: 12px; }
.field { position: relative; height: 57px; display: flex; align-items: flex-start; }
.field label { width: 53px; flex: none; line-height: 22px; }
.panel-right .field label { width: 52px; }
.input { width: 59px; height: 23px; flex: none; background: #fff; border: 1px solid #e4e4e4; border-bottom: 1px solid #8a8a8a; padding-left: 1px; line-height: 20px; border-radius: 2px; }
.input-off { background: #eeeeee; color: #888; border-bottom-color: #e4e4e4; }
.input-focus { border-bottom: 2px solid #00694d !important; }
.caret { display: inline-block; border-right: 1px solid #000; line-height: 18px; margin-top: 1px; padding-right: 1px; }
.unit { margin: 3px 0 0 10px; font-size: 12px; }
.spin { display: flex; flex-direction: column; gap: 6px; margin: 4px 0 0 5px; width: 7px; }
.spin i { width: 0; height: 0; border-left: 3.5px solid transparent; border-right: 3.5px solid transparent; border-bottom: 5px solid #333; }
.spin i + i { border-bottom: 0; border-top: 5px solid #333; }
.spin + .unit { margin-left: 15px; }
.field small { position: absolute; left: 52px; top: 25px; font-size: 11px; line-height: 16px; color: #6b6b6b; letter-spacing: .3px; white-space: nowrap; }
.panel-right .field small { left: 52px; }
```
